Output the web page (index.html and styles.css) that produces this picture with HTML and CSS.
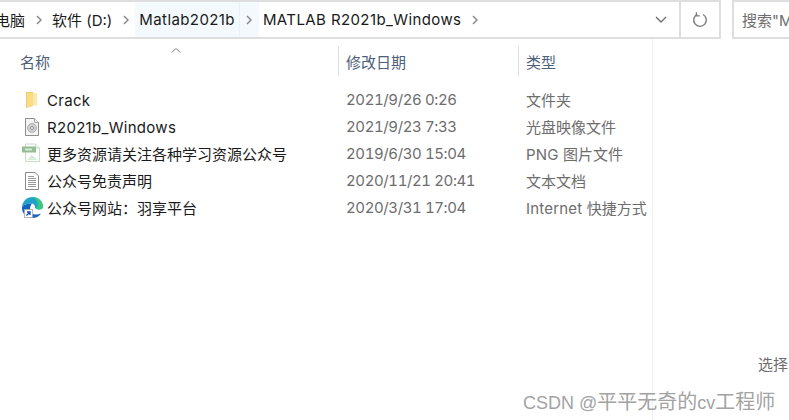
FILE: index.html
```html
<!DOCTYPE html>
<html lang="zh-CN">
<head>
    <meta charset="UTF-8">
    <title>MATLAB R2021b_Windows</title>
    <link rel="stylesheet" href="styles.css">
</head>
<body>

    <div class="toolbar">
        <div class="address-bar">
            <div class="crumbs">
                <span class="crumb crumb-first">电脑</span>
                <span class="sep-box"><svg width="6" height="10" viewBox="0 0 6 10"><path d="M1 1l4 4-4 4" fill="none" stroke="#8a8a8a" stroke-width="1.5"/></svg></span>
                <span class="crumb">软件 (D:)</span>
                <span class="sep-box"><svg width="6" height="10" viewBox="0 0 6 10"><path d="M1 1l4 4-4 4" fill="none" stroke="#8a8a8a" stroke-width="1.5"/></svg></span>
                <span class="crumb crumb-latin crumb-hover">Matlab2021b</span>
                <span class="sep-box sep-hover"><svg width="6" height="10" viewBox="0 0 6 10"><path d="M1 1l4 4-4 4" fill="none" stroke="#8a8a8a" stroke-width="1.5"/></svg></span>
                <span class="crumb crumb-latin">MATLAB R2021b_Windows</span>
                <span class="sep-box"><svg width="6" height="10" viewBox="0 0 6 10"><path d="M1 1l4 4-4 4" fill="none" stroke="#8a8a8a" stroke-width="1.5"/></svg></span>
            </div>
            <div class="dropdown">
                <svg width="12" height="7" viewBox="0 0 12 7"><path d="M1 1l5 5 5-5" fill="none" stroke="#707070" stroke-width="1.4"/></svg>
            </div>
            <div class="refresh">
                <svg width="16" height="16" viewBox="0 0 16 16"><path d="M5.200 2.400A6.300 6.300 0 1 0 11 2.500" fill="none" stroke="#7a7a7a" stroke-width="1.400"/><path d="M4.400 .2v3.600h3.400" fill="none" stroke="#7a7a7a" stroke-width="1.300"/></svg>
            </div>
        </div>
        <div class="search-box">搜索"M</div>
    </div>

    <div class="content">
        <div class="file-list">
            <div class="sort-arrow">
                <svg width="10" height="5" viewBox="0 0 10 5"><path d="M.5 4.500L5 .5l4.500 4" fill="none" stroke="#8c8c8c"/></svg>
            </div>
            <div class="file-row file-header">
                <div class="col-name">名称</div>
                <div class="col-date">修改日期</div>
                <div class="col-type">类型</div>
            </div>

            <div class="file-row">
                <div class="col-name">
                    <svg class="file-icon" width="18" height="18" viewBox="0 0 18 18">
                        <path d="M3 1h7v14l-7 2z" fill="#eecb6c"/>
                        <path d="M9.500 2H14v12.500H9.500z" fill="#fce8ac"/>
                        <path d="M4 2h5.500v13L4 16.500z" fill="#f8dc86"/>
                    </svg>
                    <span class="name-latin">Crack</span>
                </div>
                <div class="col-date">2021/9/26 0:26</div>
                <div class="col-type">文件夹</div>
            </div>

            <div class="file-row">
                <div class="col-name">
                    <svg class="file-icon" width="18" height="18" viewBox="0 0 18 18">
                        <path d="M2.500 .5h9l4 4v13h-13z" fill="#f4f4f4" stroke="#8d8d8d"/>
                        <path d="M11.500 .5v4h4" fill="#fff" stroke="#a5a5a5"/>
                        <circle cx="9" cy="10" r="4.500" fill="#cfcfcf" stroke="#b0b0b0"/>
                        <circle cx="9" cy="10" r="1.500" fill="#f6f6f6" stroke="#8f8f8f"/>
                    </svg>
                    <span class="name-latin">R2021b_Windows</span>
                </div>
                <div class="col-date">2021/9/23 7:33</div>
                <div class="col-type">光盘映像文件</div>
            </div>

            <div class="file-row">
                <div class="col-name">
                    <svg class="file-icon file-icon-wide" width="21" height="21" viewBox="0 0 21 21">
                        <path d="M3.500 1h10l4 4v13.500h-14z" fill="#fbfdfb" stroke="#c9dcc9"/>
                        <path d="M13.500 1v4h4" fill="#eef5ee" stroke="#c9dcc9"/>
                        <path d="M5.500 17l4-5 3 2.500 3 2.500z" fill="#d8ead8"/>
                        <rect x="0" y="3.500" width="14" height="6" fill="#93bd93"/>
                        <rect x="3" y="5.500" width="7" height="2" fill="#d6e8d6"/>
                    </svg>
                    <span>更多资源请关注各种学习资源公众号</span>
                </div>
                <div class="col-date">2019/6/30 15:04</div>
                <div class="col-type"><span class="latin">PNG</span> 图片文件</div>
            </div>

            <div class="file-row">
                <div class="col-name">
                    <svg class="file-icon" width="18" height="18" viewBox="0 0 18 18">
                        <path d="M2.500 .5H12l3.500 3.500v13.500h-13z" fill="#fff" stroke="#8a8a8a"/>
                        <path d="M5 4.500h6M5 6.500h8M5 8.500h8M5 10.500h8M5 12.500h8M5 14.500h8" stroke="#9a9a9a"/>
                    </svg>
                    <span>公众号免责声明</span>
                </div>
                <div class="col-date">2020/11/21 20:41</div>
                <div class="col-type">文本文档</div>
            </div>

            <div class="file-row">
                <div class="col-name">
                    <svg class="file-icon file-icon-wide" width="21" height="21" viewBox="0 0 21 21">
                        <path d="M0 10C.5 4 5 0 10.500 0 16.500 0 21 4.500 21 9.500c0 2-1.500 3-3.500 3-3.500 0-4.500-1-4.500-2.500 0-2-1.500-3.500-4-3.500C5 6.500 1.500 7.500 0 10z" fill="#1fa3c9"/>
                        <path d="M10.500 0C16.500 0 21 4.500 21 9.500c0 2-1.500 3-3.500 3-2 0-3-.3-3.500-1C17.500 8.500 16 2 10.500 0z" fill="#3cc97f"/>
                        <path d="M0 10c-.5 6 4 11 10 11 4 0 7-1.500 9-4.500-3 1.500-7.500 1.500-9.500-.5-2.500-2.500-1.500-7 .5-9.500C6 6 1.500 7.500 0 10z" fill="#1565c0"/>
                        <rect x="2.500" y="12.500" width="8" height="8" fill="#fff" stroke="#a8a8a8" stroke-width=".8"/>
                        <path d="M4.500 18.500l3-3M5 15h3v3" fill="none" stroke="#1d4fb0" stroke-width="1.400"/>
                    </svg>
                    <span>公众号网站：羽享平台</span>
                </div>
                <div class="col-date">2020/3/31 17:04</div>
                <div class="col-type"><span class="latin">Internet</span> 快捷方式</div>
            </div>
        </div>
        <div class="preview-pane">
            <div class="preview-text">选择</div>
        </div>
    </div>

    <div class="watermark">CSDN @<span class="wm-cjk">平平无奇的</span>cv<span class="wm-cjk">工程师</span></div>

</body>
</html>
```

FILE: styles.css
```css
html, body {
    height: 100%;
}
body {
    font-family: "Inter", "Noto Sans CJK SC", sans-serif;
    background-color: #fff;
    color: #1a1a1a;
    margin: 0;
    overflow: hidden;
    position: relative;
}
.toolbar {
    display: flex;
    height: 39px;
    gap: 11px;
}
.address-bar {
    width: 721px;
    flex-shrink: 0;
    display: flex;
    border-top: 2px solid #dedede;
    border-bottom: 2px solid #dedede;
    border-right: 2px solid #dedede;
    box-sizing: border-box;
    height: 39px;
}
.crumbs {
    flex: 1;
    display: flex;
    align-items: center;
    font-size: 15px;
    white-space: nowrap;
    overflow: hidden;
}
.crumb {
    height: 100%;
    display: flex;
    align-items: center;
    padding: 0 4px;
}
.crumb-first {
    margin-left: -9px;
}
.crumb-latin {
    letter-spacing: .4px;
}
.crumb-hover {
    background-color: #f3f9fd;
}
.sep-box {
    height: 100%;
    width: 19px;
    display: flex;
    align-items: center;
    justify-content: center;
    flex-shrink: 0;
}
.sep-hover {
    background-color: #f3f9fd;
    border-left: 1px solid #e9f2f9;
}
.dropdown {
    width: 36px;
    display: flex;
    align-items: center;
    justify-content: center;
}
.refresh {
    width: 38px;
    border-left: 2px solid #dedede;
    display: flex;
    align-items: center;
    justify-content: center;
}
.search-box {
    flex: 1;
    border: 2px solid #dedede;
    border-right: none;
    box-sizing: border-box;
    height: 39px;
    display: flex;
    align-items: center;
    padding-left: 8px;
    font-size: 15px;
    color: #6d6d6d;
    white-space: nowrap;
}
.content {
    display: flex;
    height: 381px;
}
.file-list {
    width: 652px;
    flex-shrink: 0;
    border-right: 1px solid #f1f1f1;
    position: relative;
}
.sort-arrow {
    position: absolute;
    left: 171px;
    top: 8px;
    line-height: 0;
}
.file-row {
    display: grid;
    grid-template-columns: 338px 180px 134px;
    height: 27px;
    align-items: center;
    font-size: 15px;
    white-space: nowrap;
}
.file-header {
    height: 30px;
    margin-top: 7px;
    margin-bottom: 10px;
    color: #4c607a;
}
.file-row .col-name {
    padding-left: 20px;
    display: flex;
    align-items: center;
}
.name-latin {
    letter-spacing: .3px;
    padding-top: 1px;
}
.file-row .col-date,
.file-row .col-type {
    padding-left: 8px;
    color: #6d6d6d;
}
.file-row .col-date {
    font-variant-numeric: tabular-nums;
    letter-spacing: -.4px;
}
.latin {
    letter-spacing: .2px;
}
.file-header .col-date,
.file-header .col-type {
    color: #4c607a;
    border-left: 1px solid #dedede;
    height: 100%;
    display: flex;
    align-items: center;
    padding-left: 7px;
    letter-spacing: 0;
}
.file-icon {
    margin-left: 3px;
    margin-right: 6px;
    flex-shrink: 0;
}
.file-icon-wide {
    margin-left: 2px;
    margin-right: 4px;
}
.preview-pane {
    flex: 1;
    display: flex;
    justify-content: flex-end;
    padding-right: 1px;
}
.preview-text {
    margin-top: 314px;
    height: 20px;
    font-size: 15px;
    color: #6d6d6d;
    white-space: nowrap;
}
.watermark {
    position: absolute;
    left: 523px;
    top: 386px;
    font-family: "Liberation Sans", "Noto Sans CJK SC", sans-serif;
    font-size: 18px;
    color: #a3a3a3;
    white-space: nowrap;
}
.wm-cjk {
    font-size: 20px;
}
```
